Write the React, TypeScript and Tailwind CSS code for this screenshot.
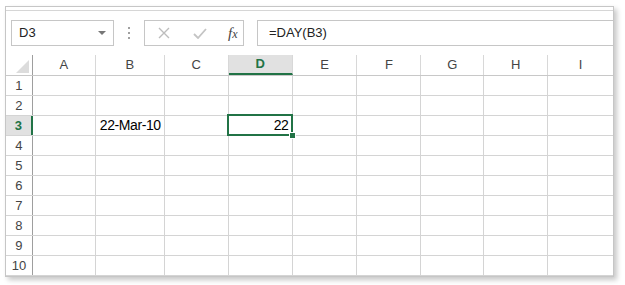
const cols = [
  { name: 'A', w: 'w-[63px]' },
  { name: 'B', w: 'w-[69px]' },
  { name: 'C', w: 'w-[64px]' },
  { name: 'D', w: 'w-[64px]' },
  { name: 'E', w: 'w-[65px]' },
  { name: 'F', w: 'w-[64px]' },
  { name: 'G', w: 'w-[63px]' },
  { name: 'H', w: 'w-[64px]' },
  { name: 'I', w: 'w-[65px]' },
]

const rows = [1, 2, 3, 4, 5, 6, 7, 8, 9, 10]

function cellText(row: number, col: string) {
  if (row === 3 && col === 'B') return '22-Mar-10'
  if (row === 3 && col === 'D') return '22'
  return ''
}

function FormulaBar() {
  return (
    <div className="flex h-[44px] items-center pl-[5px]">
      {/* Name box */}
      <div className="flex h-[26px] w-[103px] items-center justify-between border border-[#c6c6c6] bg-white pl-[7px] pr-[7px]">
        <span className="text-[13px] text-[#222]">D3</span>
        <svg width="8" height="5" viewBox="0 0 8 5">
          <path d="M0 0 L8 0 L4 4 Z" fill="#777" />
        </svg>
      </div>
      {/* Grip */}
      <div className="flex w-[30px] flex-col items-center gap-[3px]">
        <span className="h-[2px] w-[2px] bg-[#a0a0a0]" />
        <span className="h-[2px] w-[2px] bg-[#a0a0a0]" />
        <span className="h-[2px] w-[2px] bg-[#a0a0a0]" />
      </div>
      {/* Cancel / enter / fx */}
      <div className="flex h-[26px] w-[100px] items-center border border-[#c6c6c6] bg-white">
        <svg className="ml-[13px]" width="12" height="12" viewBox="0 0 12 12">
          <path d="M1 1 L11 11 M11 1 L1 11" stroke="#bdbdbd" strokeWidth="1.4" />
        </svg>
        <svg className="ml-[23px]" width="14" height="11" viewBox="0 0 14 11">
          <path d="M1 6 L5 10 L13 1" stroke="#c4c4c4" strokeWidth="1.8" fill="none" />
        </svg>
        <span
          className="ml-[21px] text-[15px] italic text-[#444]"
          style={{ fontFamily: '"Liberation Serif", serif' }}
        >
          f<span className="text-[12px]">x</span>
        </span>
      </div>
      {/* Formula input */}
      <div className="ml-[13px] flex h-[26px] flex-1 items-center border border-r-0 border-[#c6c6c6] bg-white pl-[11px]">
        <span className="text-[13px] text-[#222]">=DAY(B3)</span>
      </div>
    </div>
  )
}

function HeaderRow() {
  return (
    <div className="flex h-[21px] border-b border-[#c8c8c8]">
      <div className="relative w-[27px] border-r border-[#9e9e9e]">
        <svg className="absolute bottom-[2px] right-[3px]" width="13" height="13" viewBox="0 0 13 13">
          <path d="M13 0 L13 13 L0 13 Z" fill="#dcdcdc" />
        </svg>
      </div>
      {cols.map((c, i) => {
        const active = c.name === 'D'
        return (
          <div
            key={c.name}
            className={`${c.w} flex items-center justify-center text-[13px] ${
              i < cols.length - 1 ? 'border-r border-[#d8d8d8]' : ''
            } ${
              active
                ? 'border-b-2 border-b-[#217346] bg-[#e1e1e1] font-bold text-[#217346]'
                : 'text-[#444]'
            }`}
          >
            {c.name}
          </div>
        )
      })}
    </div>
  )
}

function GridRow({ row }: { row: number }) {
  const active = row === 3
  return (
    <div className="flex h-[20px] border-b border-[#d4d4d4]">
      <div
        className={`flex w-[27px] items-center justify-center text-[13px] ${
          active
            ? 'border-r-2 border-r-[#217346] bg-[#e1e1e1] font-bold text-[#217346]'
            : 'border-r border-[#9e9e9e] text-[#444]'
        }`}
      >
        {row}
      </div>
      {cols.map((c, i) => {
        const text = cellText(row, c.name)
        const selected = active && c.name === 'D'
        return (
          <div
            key={c.name}
            className={`${c.w} relative flex items-center justify-end pr-[3px] text-[14px] tracking-[-0.4px] text-black ${
              i < cols.length - 1 ? 'border-r border-[#d4d4d4]' : ''
            }`}
          >
            {text}
            {selected && (
              <>
                <div className="absolute -left-[2px] -top-[2px] z-10 h-[22px] w-[66px] border-2 border-[#217346]" />
                <div className="absolute -bottom-[4px] -right-[4px] z-20 h-[7px] w-[7px] border border-white bg-[#217346]" />
              </>
            )}
          </div>
        )
      })}
    </div>
  )
}

export default function App() {
  return (
    <div
      className="h-[285px] w-[625px] bg-white pl-[5px] pt-[6px]"
      style={{ fontFamily: '"Liberation Sans", Arial, sans-serif' }}
    >
      <div className="w-[609px] border border-[#c6c6c6] bg-white shadow-[3px_3px_5px_rgba(0,0,0,0.22)]">
        <div className="h-[4px] border-b border-[#d6d6d6]" />
        <FormulaBar />
        <HeaderRow />
        {rows.map((r) => (
          <GridRow key={r} row={r} />
        ))}
      </div>
    </div>
  )
}
